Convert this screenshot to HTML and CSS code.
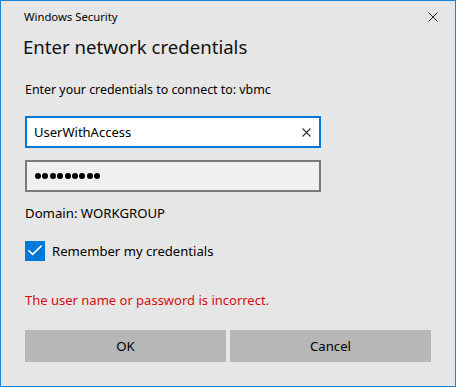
FILE: index.html
```html
<!DOCTYPE html>
<html>
<head>
<meta charset="utf-8">
<link rel="stylesheet" href="styles.css">
</head>
<body>
<div class="window">
  <div class="titlebar">
    <span class="title">Windows Security</span>
    <svg class="close" width="10" height="10" viewBox="0 0 10 10"><path d="M0.5 0.5 L9.5 9.5 M9.5 0.5 L0.5 9.5" stroke="#222" stroke-width="1" fill="none"/></svg>
  </div>
  <div class="content">
    <div class="heading">Enter network credentials</div>
    <div class="sub">Enter your credentials to connect to: vbmc</div>
    <div class="field focused">
      <span class="value">UserWithAccess</span>
      <svg class="clear" width="9" height="9" viewBox="0 0 9 9"><path d="M0.5 0.5 L8.5 8.5 M8.5 0.5 L0.5 8.5" stroke="#333" stroke-width="1.1" fill="none"/></svg>
    </div>
    <div class="field password">
      <span class="dot"></span><span class="dot"></span><span class="dot"></span><span class="dot"></span><span class="dot"></span><span class="dot"></span><span class="dot"></span><span class="dot"></span><span class="dot"></span>
    </div>
    <div class="domain">Domain: WORKGROUP</div>
    <div class="check-row">
      <span class="checkbox"><svg width="20" height="20" viewBox="0 0 20 20"><path d="M3.3 9.2 L7.6 13.4 L16.6 4.6" stroke="#fff" stroke-width="1.5" fill="none"/></svg></span>
      <span class="label">Remember my credentials</span>
    </div>
    <div class="error">The user name or password is incorrect.</div>
    <div class="buttons">
      <div class="btn">OK</div>
      <div class="btn">Cancel</div>
    </div>
  </div>
</div>
</body>
</html>
```
FILE: styles.css
```css
html, body {
  margin: 0;
  padding: 0;
}
body {
  font-family: "Noto Sans", "Open Sans", sans-serif;
  color: #000;
}
.window {
  width: 456px;
  height: 387px;
  box-sizing: border-box;
  border: 1px solid #1883d7;
  background: #e6e6e6;
}
.titlebar {
  height: 32px;
  box-sizing: border-box;
  padding: 8px 17px 0 23px;
  display: flex;
  justify-content: space-between;
  align-items: flex-start;
}
.title {
  font-size: 11.3px;
  line-height: 16px;
}
.close {
  margin-top: 3px;
  display: block;
}
.content {
  padding: 0 0 0 24px;
}
.heading {
  font-size: 18.6px;
  line-height: 28px;
  margin-left: -2px;
  color: #111;
}
.sub {
  margin-top: 21px;
  font-size: 12.4px;
  line-height: 16px;
}
.field {
  width: 296px;
  height: 32px;
  box-sizing: border-box;
  display: flex;
  align-items: center;
}
.focused {
  margin-top: 18px;
  border: 2px solid #0078d7;
  background: #fff;
  padding: 0 8px 0 7px;
  justify-content: space-between;
}
.value {
  font-size: 13px;
  line-height: 18px;
}
.clear {
  display: block;
}
.password {
  margin-top: 12px;
  border: 2px solid #7a7a7a;
  background: #f0f0f0;
  padding: 0 0 1px 8px;
  gap: 1.4px;
}
.dot {
  width: 6px;
  height: 6px;
  border-radius: 50%;
  background: #000;
}
.domain {
  margin-top: 11px;
  font-size: 13.2px;
  line-height: 20px;
}
.check-row {
  margin-top: 18px;
  height: 20px;
  display: flex;
  align-items: center;
  gap: 7px;
}
.checkbox {
  width: 20px;
  height: 20px;
  background: #0078d7;
  display: block;
}
.checkbox svg {
  display: block;
}
.label {
  font-size: 13.1px;
  line-height: 20px;
}
.error {
  margin-top: 29px;
  font-size: 13px;
  line-height: 20px;
  color: #d10f0f;
}
.buttons {
  margin-top: 20px;
  display: flex;
  gap: 4px;
}
.btn {
  width: 201px;
  height: 32px;
  background: #b7b7b7;
  display: flex;
  align-items: center;
  justify-content: center;
  font-size: 13.2px;
  line-height: 20px;
}
```
